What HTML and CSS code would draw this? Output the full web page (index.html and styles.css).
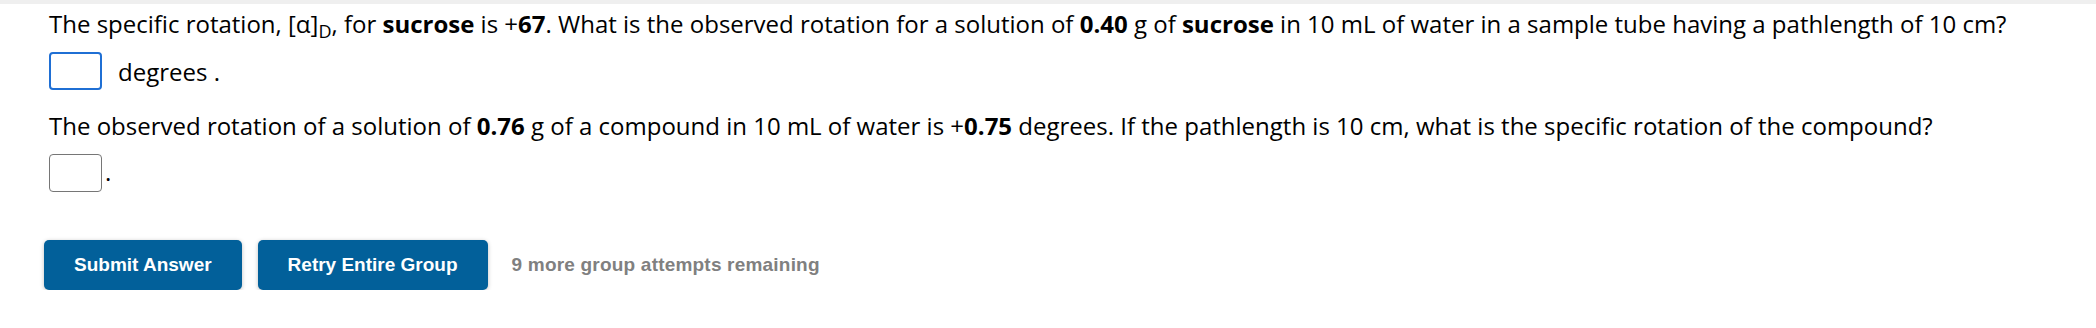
FILE: index.html
```html
<!DOCTYPE html>
<html lang="en">
<head>
    <meta charset="UTF-8">
    <title>Question Group</title>
    <link rel="stylesheet" href="styles.css">
</head>
<body>
    <div class="top-bar"></div>

    <div class="question-group">
        <div class="question">
            <p class="prompt">The specific rotation, [α]<sub>D</sub>, for <b>sucrose</b> is +<b>67</b>. What is the observed rotation for a solution of <b>0.40</b> g of <b>sucrose</b> in 10 mL of water in a sample tube having a pathlength of 10 cm?</p>
            <div class="answer-row">
                <input type="text" class="answer active">
                <span class="unit">degrees .</span>
            </div>
        </div>

        <div class="question">
            <p class="prompt">The observed rotation of a solution of <b>0.76</b> g of a compound in 10 mL of water is +<b>0.75</b> degrees. If the pathlength is 10 cm, what is the specific rotation of the compound?</p>
            <div class="answer-row tight">
                <input type="text" class="answer">
                <span class="unit">.</span>
            </div>
        </div>

        <div class="actions">
            <button class="btn">Submit Answer</button>
            <button class="btn">Retry Entire Group</button>
            <span class="attempts">9 more group attempts remaining</span>
        </div>
    </div>
</body>
</html>
```

FILE: styles.css
```css
html, body {
    margin: 0;
    padding: 0;
    background: #fff;
}
body {
    font-family: "Open Sans", "Liberation Sans", sans-serif;
    font-size: 24px;
    color: #000;
}
.top-bar {
    height: 4px;
    background-color: #efefef;
}
.question-group {
    padding: 2px 0 0 49px;
}
.prompt {
    margin: 0;
    line-height: 35px;
    white-space: nowrap;
}
.prompt b {
    font-weight: 700;
}
.prompt sub {
    font-size: 0.75em;
    line-height: 0;
    vertical-align: -0.25em;
}
.answer-row {
    display: flex;
    align-items: center;
    gap: 16px;
    margin: 11px 0 18px;
}
.answer-row.tight {
    gap: 3px;
    align-items: flex-end;
}
.answer {
    box-sizing: border-box;
    width: 53px;
    height: 38px;
    margin: 0;
    border: 1.5px solid #767676;
    border-radius: 4px;
    background: #fff;
    outline: none;
}
.answer.active {
    border: 2px solid #1f6fd4;
}
.unit {
    line-height: 35px;
}
.answer-row.tight .unit {
    line-height: 1;
    margin-bottom: 8px;
}
.actions {
    display: flex;
    align-items: center;
    gap: 16px;
    margin: 48px 0 0 -5px;
}
.btn {
    font-family: "Liberation Sans", Arial, sans-serif;
    font-size: 19px;
    font-weight: 700;
    color: #fff;
    background-color: #02609a;
    border: none;
    border-radius: 5px;
    height: 50px;
    padding: 0 30px;
    box-shadow: 0 1px 4px rgba(0, 0, 0, 0.25);
    cursor: pointer;
}
.attempts {
    font-family: "Liberation Sans", Arial, sans-serif;
    font-size: 19px;
    font-weight: 700;
    letter-spacing: 0.2px;
    color: #808080;
    margin-left: 8px;
}
```
